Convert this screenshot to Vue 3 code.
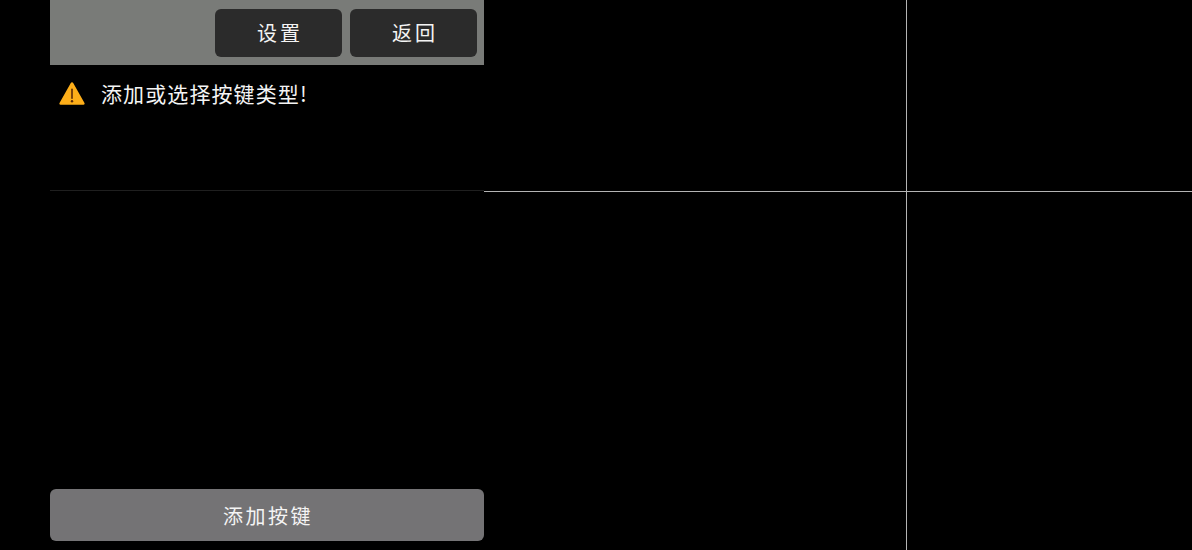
<script setup>
const actions = ['设置', '返回']
</script>

<template>
  <div class="page">
    <section class="panel">
      <div class="toolbar">
        <button v-for="a in actions" :key="a" class="tool-btn">{{ a }}</button>
      </div>
      <div class="notice">
        <svg class="warn" width="26" height="23" viewBox="0 0 26 23" aria-hidden="true">
          <path d="M13 0.2c.5 0 .9.3 1.2.8l11.3 20c.4.8-.1 1.7-1 1.7H1.5c-.9 0-1.4-.9-1-1.7L11.8 1c.3-.5.7-.8 1.2-.8z" fill="#fdae19"/>
          <rect x="12.2" y="6.5" width="1.6" height="10.5" rx=".8" fill="#5a2a08"/>
          <circle cx="13" cy="19.3" r="1.2" fill="#5a2a08"/>
        </svg>
        <span class="notice-text">添加或选择按键类型!</span>
      </div>
      <div class="spacer"></div>
      <button class="add-btn">添加按键</button>
    </section>
    <section class="canvas">
      <div class="cell top-left"></div>
      <div class="cell top-right"></div>
      <div class="cell bottom-left"></div>
      <div class="cell bottom-right"></div>
    </section>
  </div>
</template>

<style>
html, body { margin: 0; background: #000; }
</style>

<style scoped>
.page {
  display: flex;
  width: 1192px;
  height: 550px;
  background: #000;
  overflow: hidden;
  font-family: "Noto Sans CJK SC", "Noto Sans", sans-serif;
  color: #f4f4f4;
}
.panel {
  display: flex;
  flex-direction: column;
  width: 434px;
  margin-left: 50px;
  height: 541px;
}
.toolbar {
  display: flex;
  justify-content: flex-end;
  gap: 8px;
  height: 65px;
  box-sizing: border-box;
  padding: 9px 7px 8px;
  background: #797b78;
}
.tool-btn {
  width: 127px;
  height: 48px;
  padding: 0 0 2px 3px;
  border: 0;
  border-radius: 6px;
  background: #2b2b2b;
  color: #f4f4f4;
  font: inherit;
  font-size: 20px;
  letter-spacing: 3px;
}
.notice {
  display: flex;
  align-items: flex-start;
  height: 126px;
  box-sizing: border-box;
  padding: 12px 0 0 9px;
  border-bottom: 1px solid #1f1f1f;
}
.warn {
  flex: none;
  margin-top: 5px;
}
.notice-text {
  margin-left: 16px;
  font-size: 21px;
  line-height: 32px;
  letter-spacing: 1.1px;
}
.spacer {
  flex: 1;
}
.add-btn {
  height: 52px;
  padding: 0 0 0 2px;
  border: 0;
  border-radius: 6px;
  background: #747375;
  color: #f4f4f4;
  font: inherit;
  font-size: 20px;
  letter-spacing: 2.5px;
}
.canvas {
  flex: 1;
  display: grid;
  grid-template-columns: 423px 1fr;
  grid-template-rows: 192px 1fr;
}
.cell {
  box-sizing: border-box;
}
.top-left {
  border-right: 1px solid #b4b4b4;
  border-bottom: 1px solid #b4b4b4;
}
.top-right {
  border-bottom: 1px solid #b4b4b4;
}
.bottom-left {
  border-right: 1px solid #b4b4b4;
}
</style>
